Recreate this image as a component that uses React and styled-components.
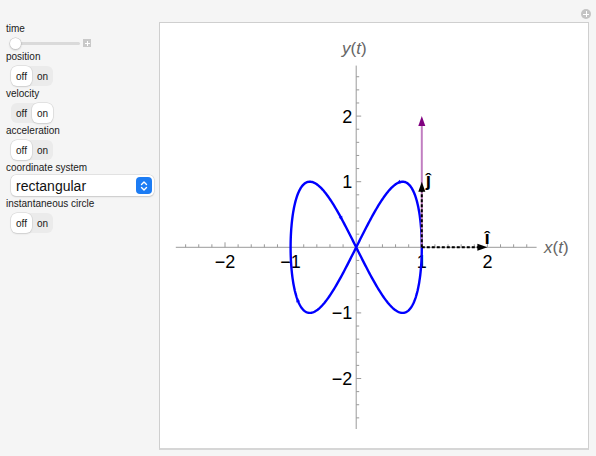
import styled, { createGlobalStyle } from 'styled-components';

const GlobalStyle = createGlobalStyle`
  html, body {
    margin: 0;
    padding: 0;
    background: #f5f5f5;
  }
  body {
    font-family: "Liberation Sans", Arial, sans-serif;
  }
`;

const Frame = styled.div`
  width: 596px;
  height: 456px;
  box-sizing: border-box;
  position: relative;
  display: flex;
  padding: 22px 7px 6px 0;
  background: #f5f5f5;
`;

const Controls = styled.div`
  width: 159px;
  flex-shrink: 0;
  display: flex;
  flex-direction: column;
  padding: 1px 6px 0;
  box-sizing: border-box;
`;

const Label = styled.div`
  font-size: 10px;
  color: #1a1a1a;
  height: 12px;
  line-height: 12px;
`;

const SliderRow = styled.div`
  display: flex;
  align-items: center;
  height: 16px;
  padding-left: 6px;
  gap: 3px;
`;

const Track = styled.div`
  position: relative;
  width: 68px;
  height: 3px;
  border-radius: 2px;
  background: #dadada;
`;

const Thumb = styled.div`
  position: absolute;
  left: -2px;
  top: -4px;
  width: 11px;
  height: 11px;
  border-radius: 50%;
  background: #fff;
  box-shadow: 0 0 0 0.5px #c4c4c4, 0 1px 2px rgba(0, 0, 0, 0.25);
`;

const PlusBox = styled.div`
  width: 8px;
  height: 8px;
  background: #c9c9c9;
  position: relative;
  &::before,
  &::after {
    content: '';
    position: absolute;
    background: #fff;
  }
  &::before {
    left: 1.5px;
    top: 3.5px;
    width: 5px;
    height: 1px;
  }
  &::after {
    left: 3.5px;
    top: 1.5px;
    width: 1px;
    height: 5px;
  }
`;

const Toggle = styled.div`
  display: flex;
  width: 42px;
  height: 20px;
  margin: 3px 0 2px 5px;
  background: #ebebeb;
  border-radius: 6px;
`;

const Seg = styled.div`
  flex: 1;
  display: flex;
  align-items: center;
  justify-content: center;
  font-size: 10px;
  color: #1a1a1a;
  border-radius: 6px;
  background: ${(p) => (p.$active ? '#fff' : 'transparent')};
  box-shadow: ${(p) =>
    p.$active ? '0 0 0 0.5px #cfcfcf, 0 1px 1.5px rgba(0,0,0,0.15)' : 'none'};
`;

const Select = styled.div`
  display: flex;
  align-items: center;
  justify-content: space-between;
  height: 21px;
  margin: 1px 0 2px 5px;
  width: 143px;
  box-sizing: border-box;
  padding: 0 2px 0 5px;
  background: #fff;
  border-radius: 5px;
  box-shadow: 0 0 0 0.5px #cfcfcf, 0 1px 1.5px rgba(0, 0, 0, 0.18);
  font-size: 14px;
  color: #111;
`;

const Stepper = styled.div`
  width: 16px;
  height: 17px;
  border-radius: 4px;
  background: #1c7cf4;
  display: flex;
  align-items: center;
  justify-content: center;
`;

const PlotPanel = styled.div`
  flex: 1;
  background: #fff;
  border: 1px solid #cfcfcf;
  border-bottom: 2px solid #d6d6d6;
  position: relative;
`;

const CornerButton = styled.div`
  position: absolute;
  right: 5px;
  top: 9px;
  width: 10px;
  height: 10px;
  border-radius: 50%;
  background: #c4c4c4;
  &::before,
  &::after {
    content: '';
    position: absolute;
    background: #fff;
  }
  &::before {
    left: 2px;
    top: 4.5px;
    width: 6px;
    height: 1px;
  }
  &::after {
    left: 4.5px;
    top: 2px;
    width: 1px;
    height: 6px;
  }
`;

const ToggleControl = ({ on }) => (
  <Toggle>
    <Seg $active={!on}>off</Seg>
    <Seg $active={on}>on</Seg>
  </Toggle>
);

const OX = 196.2;
const OY = 224.3;
const U = 65.6;
const px = (x) => OX + U * x;
const py = (y) => OY - U * y;

const curvePath = () => {
  const n = 400;
  let d = '';
  for (let i = 0; i <= n; i++) {
    const t = (i / n) * Math.PI * 2;
    const X = px(Math.cos(t));
    const Y = py(Math.sin(2 * t));
    d += `${i === 0 ? 'M' : 'L'}${X.toFixed(2)},${Y.toFixed(2)}`;
  }
  return d;
};

const headAt = (x, y, dx, dy, len, w) => {
  const m = Math.hypot(dx, dy);
  const ux = dx / m;
  const uy = dy / m;
  const bx = x - ux * len;
  const by = y - uy * len;
  return `${x},${y} ${bx - uy * w},${by + ux * w} ${bx + uy * w},${by - ux * w}`;
};

const Plot = () => {
  const ticks = [];
  for (let i = -13; i <= 13; i++) {
    if (i === 0) continue;
    const v = i * 0.2;
    const major = i % 5 === 0;
    const len = major ? 5 : 3;
    ticks.push(
      <line key={`x${i}`} x1={px(v)} y1={OY} x2={px(v)} y2={OY - len} stroke="#9a9a9a" strokeWidth="1" />,
      <line key={`y${i}`} x1={OX} y1={py(v)} x2={OX + len} y2={py(v)} stroke="#9a9a9a" strokeWidth="1" />
    );
  }
  const dirArrows = [0.9, 2.7, 4.5].map((t) => {
    const x = px(Math.cos(t));
    const y = py(Math.sin(2 * t));
    const dx = -Math.sin(t);
    const dy = -2 * Math.cos(2 * t);
    return <polygon key={t} points={headAt(x, y, dx, dy, 4, 2)} fill="#0000ff" />;
  });
  const text = { fontFamily: '"Liberation Sans", Arial, sans-serif' };
  return (
    <svg width="428" height="424" style={{ display: 'block' }}>
      <line x1={px(-2.75)} y1={OY} x2={px(2.75)} y2={OY} stroke="#9a9a9a" strokeWidth="1" />
      <line x1={OX} y1={py(2.77)} x2={OX} y2={py(-2.77)} stroke="#9a9a9a" strokeWidth="1" />
      {ticks}
      <g {...text} fontSize="18" fill="#000" textAnchor="middle">
        <text x={px(-2)} y={OY + 21}>−2</text>
        <text x={px(-1)} y={OY + 21}>−1</text>
        <text x={px(1)} y={OY + 21}>1</text>
        <text x={px(2)} y={OY + 21}>2</text>
      </g>
      <g {...text} fontSize="18" fill="#000" textAnchor="end">
        <text x={OX - 4} y={py(2) + 6.5}>2</text>
        <text x={OX - 4} y={py(1) + 6.5}>1</text>
        <text x={OX - 4} y={py(-1) + 6.5}>−1</text>
        <text x={OX - 4} y={py(-2) + 6.5}>−2</text>
      </g>
      <g {...text} fontSize="17" fill="#666">
        <text x="384" y={OY + 6}>
          <tspan fontStyle="italic">x</tspan>(<tspan fontStyle="italic">t</tspan>)
        </text>
        <text x="182" y="31">
          <tspan fontStyle="italic">y</tspan>(<tspan fontStyle="italic">t</tspan>)
        </text>
      </g>
      <path d={curvePath()} fill="none" stroke="#0000ff" strokeWidth="2.4" strokeLinejoin="round" />
      {dirArrows}
      <line x1={px(1)} y1={OY} x2={px(1)} y2={py(2) + 8} stroke="#c17ec1" strokeWidth="2" />
      <polygon points={headAt(px(1), py(2), 0, -1, 10, 3.5)} fill="#800080" />
      <line x1={px(1)} y1={OY} x2={px(1)} y2={py(1) + 8} stroke="#000" strokeWidth="2" strokeDasharray="3 2" />
      <polygon points={headAt(px(1), py(1), 0, -1, 10, 3.5)} fill="#000" />
      <line x1={px(1)} y1={OY} x2={px(2) - 8} y2={OY} stroke="#000" strokeWidth="2" strokeDasharray="3 2" />
      <polygon points={headAt(px(2), OY, 1, 0, 10, 3.5)} fill="#000" />
      <g {...text} fontSize="19" fontWeight="bold" fill="#000">
        <text x={px(2) - 3} y={OY - 3}>î</text>
        <text x={px(1) + 4} y={py(1) + 4}>ĵ</text>
      </g>
    </svg>
  );
};

export default function App() {
  return (
    <>
      <GlobalStyle />
      <Frame>
        <CornerButton />
        <Controls>
          <Label>time</Label>
          <SliderRow>
            <Track>
              <Thumb />
            </Track>
            <PlusBox />
          </SliderRow>
          <Label>position</Label>
          <ToggleControl on={false} />
          <Label>velocity</Label>
          <ToggleControl on />
          <Label>acceleration</Label>
          <ToggleControl on={false} />
          <Label>coordinate system</Label>
          <Select>
            <span>rectangular</span>
            <Stepper>
              <svg width="8" height="12" viewBox="0 0 8 12">
                <path d="M1.5 4.5 L4 2 L6.5 4.5 M1.5 7.5 L4 10 L6.5 7.5" fill="none" stroke="#fff" strokeWidth="1.4" strokeLinecap="round" strokeLinejoin="round" />
              </svg>
            </Stepper>
          </Select>
          <Label>instantaneous circle</Label>
          <ToggleControl on={false} />
        </Controls>
        <PlotPanel>
          <Plot />
        </PlotPanel>
      </Frame>
    </>
  );
}
